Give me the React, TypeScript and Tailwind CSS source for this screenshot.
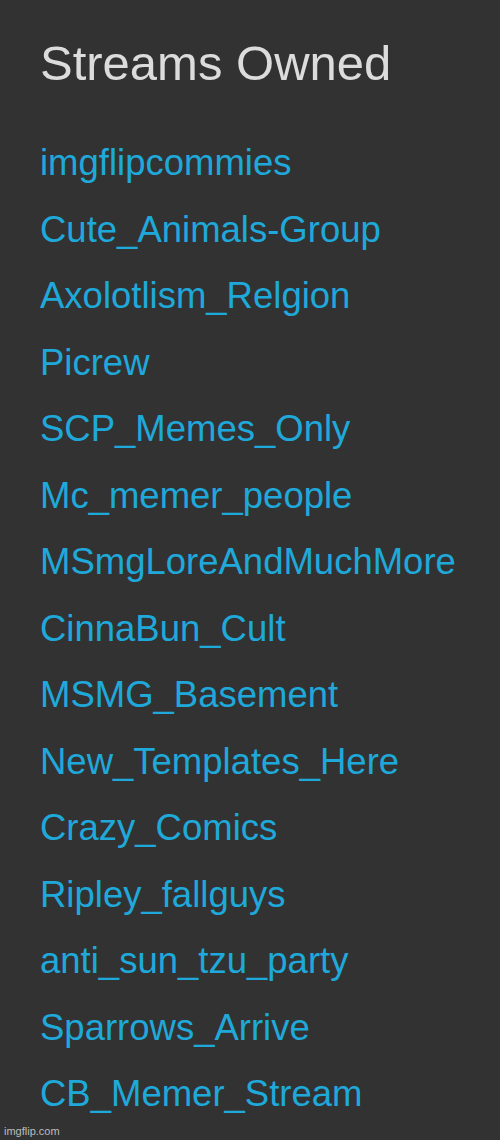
import React from 'react';

const streams = [
  'imgflipcommies',
  'Cute_Animals-Group',
  'Axolotlism_Relgion',
  'Picrew',
  'SCP_Memes_Only',
  'Mc_memer_people',
  'MSmgLoreAndMuchMore',
  'CinnaBun_Cult',
  'MSMG_Basement',
  'New_Templates_Here',
  'Crazy_Comics',
  'Ripley_fallguys',
  'anti_sun_tzu_party',
  'Sparrows_Arrive',
  'CB_Memer_Stream',
];

export default function App() {
  return (
    <div className="relative h-[1140px] w-[500px] overflow-hidden bg-[#323232] font-['Liberation_Sans',Arial,sans-serif]">
      <div className="px-10 pt-[39px]">
        {/* Section title */}
        <h2 className="text-[49px] leading-[49px] font-normal text-[#dcdcdc]">Streams Owned</h2>

        {/* Owned stream links */}
        <ul className="mt-[42px]">
          {streams.map((name) => (
            <li key={name} className="h-[66.5px] text-[36.5px] leading-[66.5px]">
              <a href="#" className="text-[#1fa9da] hover:underline">
                {name}
              </a>
            </li>
          ))}
        </ul>
      </div>

      <span className="absolute bottom-[3px] left-[4px] text-[11px] leading-none text-[#bdbdbd]">imgflip.com</span>
    </div>
  );
}
